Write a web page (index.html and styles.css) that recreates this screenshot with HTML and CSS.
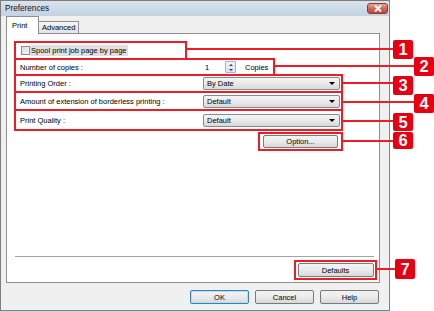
FILE: index.html
```html
<!DOCTYPE html>
<html>
<head>
<meta charset="utf-8">
<link rel="stylesheet" href="styles.css">
</head>
<body>
<div class="window">
  <div class="titlebar">
    <span class="title">Preferences</span>
    <span class="close"><svg width="10" height="7" viewBox="0 0 10 7"><path d="M2 0.5 L8 6.5 M8 0.5 L2 6.5" stroke="#fff" stroke-width="2"/></svg></span>
  </div>
  <div class="client">
    <div class="tabs">
      <div class="tab active">Print</div>
      <div class="tab">Advanced</div>
    </div>
    <div class="panel">
      <div class="settings">
        <div class="box b1"><span class="check"></span><span class="focus">Spool print job page by page</span></div>
        <div class="box b2"><span class="label">Number of copies :</span><span class="num">1</span><span class="spin"><span class="up"></span><span class="down"></span></span><span class="unit">Copies</span></div>
        <div class="box b3"><span class="label">Printing Order :</span><span class="combo"><span>By Date</span><span class="arrow"></span></span></div>
        <div class="box b4"><span class="label">Amount of extension of borderless printing :</span><span class="combo"><span>Default</span><span class="arrow"></span></span></div>
        <div class="box b5"><span class="label">Print Quality :</span><span class="combo"><span>Default</span><span class="arrow"></span></span></div>
        <div class="box b6"><span class="btn option">Option...</span></div>
      </div>
      <div class="spacer"></div>
      <div class="sep"></div>
      <div class="box b7"><span class="btn defaults">Defaults</span></div>
    </div>
    <div class="footer">
      <span class="btn dlg primary">OK</span>
      <span class="btn dlg">Cancel</span>
      <span class="btn dlg">Help</span>
    </div>
  </div>
</div>
<div class="callouts">
  <div class="line l1"></div>
  <div class="line l2"></div>
  <div class="line l3"></div>
  <div class="line l4"></div>
  <div class="line l5"></div>
  <div class="line l6"></div>
  <div class="line l7"></div>
  <div class="badge n1">1</div>
  <div class="badge n2">2</div>
  <div class="badge n3">3</div>
  <div class="badge n4">4</div>
  <div class="badge n5">5</div>
  <div class="badge n6">6</div>
  <div class="badge n7">7</div>
</div>
</body>
</html>
```

FILE: styles.css
```css
* { box-sizing: border-box; }
html, body { margin: 0; padding: 0; }
body {
  width: 434px;
  height: 311px;
  position: relative;
  overflow: hidden;
  background: #ffffff;
  font-family: "Liberation Sans", Arial, sans-serif;
  font-size: 7.5px;
  color: #000;
}
.window {
  width: 390px;
  height: 311px;
  border: 1px solid #7d7d7d;
  border-right-color: #3a9fa6;
  border-bottom-color: #3a9fa6;
  display: flex;
  flex-direction: column;
  background: #f0f0f0;
}
.titlebar {
  height: 15px;
  flex: none;
  display: flex;
  align-items: center;
  justify-content: space-between;
  padding: 0 1px 0 4px;
  background: linear-gradient(to bottom, #d9e3ee, #c4d2e2);
}
.title { font-size: 8.2px; color: #111; }
.close {
  width: 21px;
  height: 11px;
  border: 1px solid #8b3a32;
  border-radius: 3px;
  background: linear-gradient(to bottom, #e9a99d, #d0685a 50%, #c2493a);
  display: flex;
  align-items: center;
  justify-content: center;
}
.close svg { display: block; }
.client {
  flex: 1;
  display: flex;
  flex-direction: column;
  padding: 0 9px 0 5px;
}
.tabs {
  height: 17px;
  display: flex;
  align-items: flex-end;
  flex: none;
}
.tab {
  height: 12px;
  padding: 0 3px;
  border: 1px solid #8e8f8f;
  border-bottom: none;
  background: linear-gradient(to bottom, #f4f4f4, #e2e2e2);
  display: flex;
  align-items: center;
  width: 41px;
  margin-left: -1px;
}
.tab.active {
  height: 18px;
  width: 33px;
  margin-left: 0;
  margin-bottom: -1px;
  background: #ffffff;
  padding: 0 0 0 5px;
  position: relative;
  z-index: 1;
}
.panel {
  height: 250px;
  flex: none;
  background: #ffffff;
  border: 1px solid #8e8f8f;
  display: flex;
  flex-direction: column;
  padding: 7px 0 2px 7px;
}
.settings { display: flex; flex-direction: column; }
.box {
  border: 2px solid #ee1c24;
  display: flex;
  align-items: center;
}
.b1 { width: 173px; height: 19px; padding-left: 5px; }
.b2 { width: 261px; height: 18px; margin-top: -2px; }
.b3 { width: 329px; height: 19px; margin-top: -2px; }
.b4 { width: 329px; height: 20px; margin-top: -2px; }
.b5 { width: 329px; height: 22px; margin-top: -2px; }
.b6 { width: 85px; height: 19px; margin-top: 1px; margin-left: 244px; justify-content: center; }
.check {
  width: 9px;
  height: 9px;
  border: 1px solid #8e8f8f;
  background: linear-gradient(135deg, #dcdcdc, #f7f7f7);
  flex: none;
}
.focus {
  background: #e0e0e0;
  padding: 1px;
}
.label { width: 187px; padding-left: 4px; flex: none; }
.num { width: 22px; padding-left: 2px; flex: none; }
.spin {
  width: 11px;
  height: 12px;
  border: 1px solid #a7b4c4;
  border-radius: 1px;
  background: linear-gradient(to bottom, #f0f4f9, #dbe3ee);
  display: flex;
  flex-direction: column;
  align-items: center;
  justify-content: space-around;
  flex: none;
}
.spin .up { width: 0; height: 0; border-left: 2px solid transparent; border-right: 2px solid transparent; border-bottom: 2px solid #2d3e56; }
.spin .down { width: 0; height: 0; border-left: 2px solid transparent; border-right: 2px solid transparent; border-top: 2px solid #2d3e56; }
.unit { margin-left: 9px; }
.combo {
  width: 137px;
  height: 13px;
  border: 1px solid #8a8a8a;
  border-radius: 2px;
  background: linear-gradient(to bottom, #f5f5f5, #e9e9e9 50%, #d9d9d9);
  display: flex;
  align-items: center;
  justify-content: space-between;
  padding: 0 4px 0 3px;
  flex: none;
}
.arrow {
  width: 0; height: 0;
  border-left: 3px solid transparent;
  border-right: 3px solid transparent;
  border-top: 3px solid #000;
}
.btn {
  display: flex;
  align-items: center;
  justify-content: center;
  border: 1px solid #7a7a7a;
  border-radius: 2px;
  background: linear-gradient(to bottom, #f3f3f3, #ebebeb 50%, #d8d8d8);
  flex: none;
}
.option { width: 75px; height: 13px; }
.spacer { flex: 1; }
.sep { width: 359px; height: 1px; margin-left: 1px; background: #a3a3a3; margin-bottom: 3px; flex: none; }
.b7 { width: 83px; height: 20px; align-self: flex-end; margin-right: 2px; justify-content: center; flex: none; }
.defaults { width: 76px; height: 14px; }
.footer {
  display: flex;
  justify-content: flex-end;
  gap: 6px;
  padding: 7px 1px 0 0;
}
.dlg { width: 59px; height: 14px; }
.primary { border-color: #3c7fb1; box-shadow: inset 0 0 0 1px #b3e0f7; }
.callouts { position: absolute; left: 0; top: 0; width: 434px; height: 311px; pointer-events: none; }
.line { position: absolute; height: 2px; background: #ee1c24; }
.l1 { top: 48px; left: 187px; width: 207px; }
.l2 { top: 65px; left: 275px; width: 141px; }
.l3 { top: 82px; left: 343px; width: 51px; }
.l4 { top: 101px; left: 343px; width: 73px; }
.l5 { top: 120px; left: 343px; width: 51px; }
.l6 { top: 140px; left: 343px; width: 51px; }
.l7 { top: 268px; left: 377px; width: 19px; }
.badge {
  position: absolute;
  width: 20px;
  height: 19px;
  background: #e60012;
  border-radius: 2px;
  color: #fff;
  font-family: "Liberation Sans", Arial, sans-serif;
  font-weight: bold;
  font-size: 16.5px;
  display: flex;
  align-items: center;
  justify-content: center;
  line-height: 1;
}
.n1 { left: 393px; top: 40px; }
.n2 { left: 414px; top: 57px; }
.n3 { left: 393px; top: 76px; }
.n4 { left: 414px; top: 94px; }
.n5 { left: 393px; top: 113px; height: 18px; }
.n6 { left: 393px; top: 132px; height: 17px; }
.n7 { left: 395px; top: 259px; height: 20px; }
```
